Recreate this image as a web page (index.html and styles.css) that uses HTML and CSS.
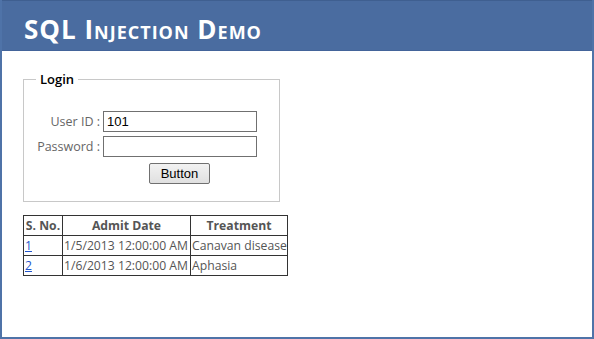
FILE: index.html
```html
<!DOCTYPE html>
<html>
<head>
<meta charset="utf-8">
<link rel="stylesheet" href="styles.css">
</head>
<body>
<div class="page">
  <div class="header"><h1 class="title">SQL Injection Demo</h1></div>
  <div class="main">
    <fieldset class="login">
      <legend class="legend">Login</legend>
      <div class="form">
        <label class="lbl">User ID :</label>
        <input class="inp" type="text" value="101">
        <label class="lbl">Password :</label>
        <input class="inp" type="password">
        <div></div>
        <div class="btnrow"><button class="btn">Button</button></div>
      </div>
    </fieldset>
    <table class="grid">
      <colgroup><col class="c1"><col class="c2"><col class="c3"></colgroup>
      <tr><th>S. No.</th><th>Admit Date</th><th>Treatment</th></tr>
      <tr><td><a href="#">1</a></td><td>1/5/2013 12:00:00 AM</td><td>Canavan disease</td></tr>
      <tr><td><a href="#">2</a></td><td>1/6/2013 12:00:00 AM</td><td>Aphasia</td></tr>
    </table>
  </div>
</div>
</body>
</html>
```
FILE: styles.css
```css
html, body { margin: 0; padding: 0; background: #fff; }
.page {
  width: 594px; height: 339px; box-sizing: border-box;
  border: 2px solid #4f73a8; border-top: 0;
  font-family: "Open Sans", "Noto Sans", sans-serif;
  overflow: hidden;
}
.header {
  height: 51px; box-sizing: border-box;
  background: #4a6ca0;
  border-top: 1px solid #3f5f90;
  border-bottom: 1px solid #43649a;
  margin: 0 -2px; padding-left: 24px;
  display: flex; align-items: center;
}
.title {
  margin: 0; color: #fff; font-size: 26px; font-weight: 700;
  font-variant: small-caps; letter-spacing: 1px; line-height: 1;
  padding-top: 6px;
}
.main { padding: 19px 0 0 21px; }
.login {
  margin: 0; width: 257px; box-sizing: border-box; height: 132px;
  border: 1px solid #c8c8c8; padding: 0;
}
.legend { margin-left: 12px; padding: 0 4px; font-size: 13px; color: #000; font-weight: 600; }
.form {
  display: grid; grid-template-columns: 76px 154px; column-gap: 3px; row-gap: 4px;
  margin-top: 23px; align-items: center;
}
.lbl { text-align: right; font-size: 12.5px; color: #666; }
.inp {
  width: 154px; height: 21px; box-sizing: border-box; margin: 0;
  border: 1px solid #707070; font-family: "Liberation Sans", Arial, sans-serif; font-size: 13px;
  padding: 1px 3px; color: #000;
}
.btnrow { padding-left: 46px; padding-top: 0; }
.btn {
  width: 61px; height: 21px; margin: 0; padding: 0;
  font-family: "Liberation Sans", Arial, sans-serif; font-size: 13px; color: #000;
  border: 1px solid #707070; border-radius: 2px;
  background: linear-gradient(#f2f2f2, #e0e0e0);
}
.grid {
  margin-top: 13px; border-collapse: collapse; border: 1px solid #333;
  font-size: 12.2px; color: #555; table-layout: fixed; width: 264px;
}
.grid th, .grid td { border: 1px solid #333; padding: 0 1px; height: 19px; white-space: nowrap; overflow: visible; }
.grid th { font-weight: 700; text-align: center; }
.grid td { text-align: left; }
.c1 { width: 39px; }
.c2 { width: 128px; }
.c3 { width: 97px; }
.grid a { color: #2255cc; }
```
